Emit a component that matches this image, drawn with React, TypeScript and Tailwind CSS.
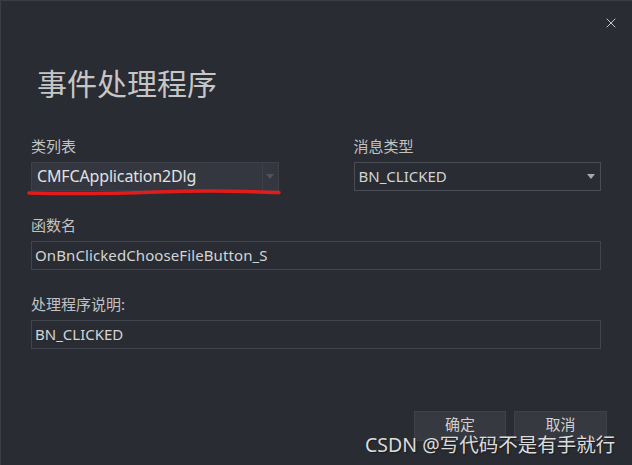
import { X } from 'lucide-react';

const font = { fontFamily: '"Noto Sans", "Noto Sans CJK SC", sans-serif' };

function Label({ children }: { children: React.ReactNode }) {
  return <div className="h-[24px] text-[15px] leading-[24px] text-[#c2c2c2]">{children}</div>;
}

function Caret() {
  return (
    <svg width="8" height="5" viewBox="0 0 8 5" className="shrink-0">
      <path d="M0 0h8L4 5z" fill="#a8a8a8" />
    </svg>
  );
}

export default function App() {
  return (
    <div
      className="relative w-[632px] h-[465px] overflow-hidden bg-[#292c33] border-t border-l border-[#3a3d44] flex flex-col"
      style={font}
    >
      {/* header */}
      <div className="flex justify-end pt-[14px] pr-[13px] h-[40px]">
        <X className="h-[16px] w-[16px] text-[#c8c8c8]" strokeWidth={1.5} />
      </div>

      <h1 className="mt-[25px] pl-[36px] h-[36px] text-[30px] leading-[36px] font-normal text-[#c6c6c6]">
        事件处理程序
      </h1>

      <div className="mt-[32px] pl-[30px] pr-[31px] grid grid-cols-2 gap-x-[75px]">
        <div className="flex flex-col gap-[4px]">
          <Label>类列表</Label>
          <div className="relative h-[29px] flex bg-[#343740] border border-[#3d4048]">
            <div className="flex-1 pl-[5px] text-[16px] leading-[27px] tracking-[-0.15px] text-[#e2e2e2]">CMFCApplication2Dlg</div>
            <div className="w-[16px] border-l border-[#3d4048] flex items-center justify-center">
              <svg width="8" height="5" viewBox="0 0 8 5">
                <path d="M0 0h8L4 5z" fill="#50535a" />
              </svg>
            </div>
            {/* red hand-drawn underline */}
            <svg
              className="absolute left-[-5px] top-[24px]"
              width="256"
              height="10"
              viewBox="0 0 256 10"
            >
              <path
                d="M2 6 C40 7 90 6.5 130 5 C160 3.8 190 3.5 220 4.5 C235 5 245 5.5 252 5.5"
                fill="none"
                stroke="#e31b1b"
                strokeWidth="3.5"
                strokeLinecap="round"
              />
            </svg>
          </div>
        </div>
        <div className="flex flex-col gap-[4px]">
          <Label>消息类型</Label>
          <div className="h-[29px] flex items-center pl-[4px] pr-[5px] border border-[#4a4d55]">
            <div className="flex-1 text-[15px] leading-[27px] text-[#d4d4d4]">BN_CLICKED</div>
            <Caret />
          </div>
        </div>
      </div>

      <div className="mt-[22px] pl-[30px] pr-[31px] flex flex-col gap-[4px]">
        <Label>函数名</Label>
        <div className="h-[29px] pl-[3px] border border-[#42454d] text-[15px] leading-[27px] tracking-[0.1px] text-[#d4d4d4]">
          OnBnClickedChooseFileButton_S
        </div>
      </div>

      <div className="mt-[22px] pl-[30px] pr-[31px] flex flex-col gap-[4px]">
        <Label>处理程序说明:</Label>
        <div className="h-[29px] pl-[3px] border border-[#42454d] text-[15px] leading-[27px] text-[#d4d4d4]">
          BN_CLICKED
        </div>
      </div>

      <div className="mt-[62px] pr-[25px] flex justify-end gap-[8px]">
        <button className="w-[92px] h-[30px] pb-[3px] bg-[#363940] border border-[#3e4149] text-[15px] text-[#d0d0d0]">
          确定
        </button>
        <button className="w-[93px] h-[30px] pb-[3px] bg-[#363940] border border-[#3e4149] text-[15px] text-[#d0d0d0]">
          取消
        </button>
      </div>

      {/* watermark */}
      <div
        className="absolute left-[364px] top-[431px] text-[19.5px] leading-[26px] text-[#dcdcdc] whitespace-nowrap"
        style={{ textShadow: '1px 1px 1px #1a1c20' }}
      >
        CSDN @写代码不是有手就行
      </div>
    </div>
  );
}
